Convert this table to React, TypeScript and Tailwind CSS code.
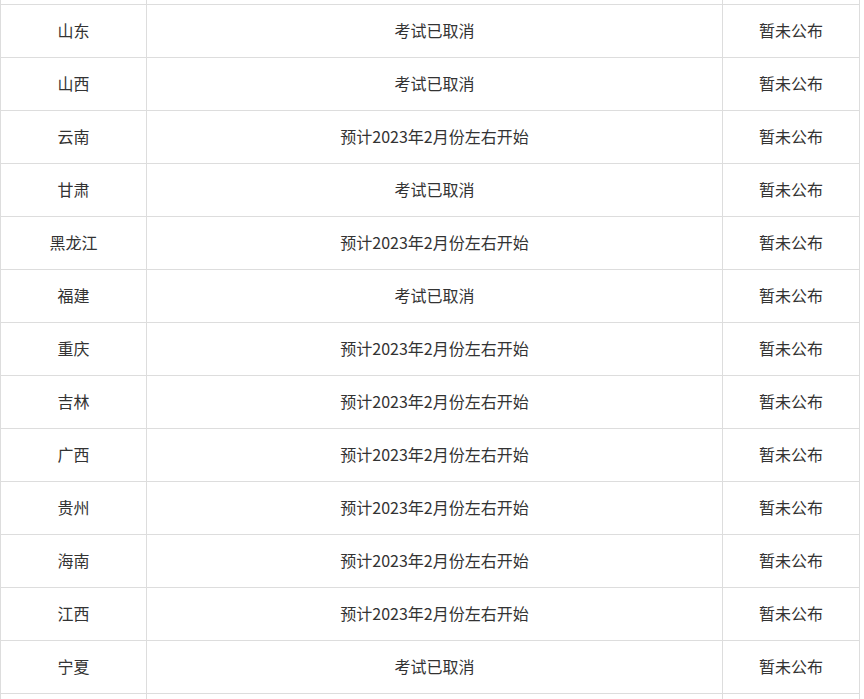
import React from "react";

const rows: [string, string][] = [
  ["山东", "考试已取消"],
  ["山西", "考试已取消"],
  ["云南", "预计2023年2月份左右开始"],
  ["甘肃", "考试已取消"],
  ["黑龙江", "预计2023年2月份左右开始"],
  ["福建", "考试已取消"],
  ["重庆", "预计2023年2月份左右开始"],
  ["吉林", "预计2023年2月份左右开始"],
  ["广西", "预计2023年2月份左右开始"],
  ["贵州", "预计2023年2月份左右开始"],
  ["海南", "预计2023年2月份左右开始"],
  ["江西", "预计2023年2月份左右开始"],
  ["宁夏", "考试已取消"],
];

function Row({ cells }: { cells: [string, string, string] }) {
  return (
    <div className="grid h-[53px] grid-cols-[146px_576px_138px] border-t border-[#dddddd]">
      <div className="flex items-center justify-center border-l border-[#dddddd] pb-[2px]">{cells[0]}</div>
      <div className="flex items-center justify-center border-l border-[#dddddd] pb-[2px]">{cells[1]}</div>
      <div className="flex items-center justify-center border-l border-r border-[#dddddd] pb-[2px]">{cells[2]}</div>
    </div>
  );
}

export default function App() {
  return (
    <div
      className="h-[699px] overflow-hidden bg-white text-[16px] text-[#333333]"
      style={{ fontFamily: '"Noto Sans CJK SC", "Noto Sans", sans-serif' }}
    >
      <div className="w-[860px]">
        {/* tail of the row above, cut by the viewport */}
        <div className="grid h-[4px] grid-cols-[146px_576px_138px]">
          <div className="border-l border-[#dddddd]" />
          <div className="border-l border-[#dddddd]" />
          <div className="border-l border-r border-[#dddddd]" />
        </div>
        {rows.map(([prov, status]) => (
          <Row key={prov} cells={[prov, status, "暂未公布"]} />
        ))}
        {/* next row, only its top edge is in view */}
        <Row cells={["", "", ""]} />
      </div>
    </div>
  );
}
